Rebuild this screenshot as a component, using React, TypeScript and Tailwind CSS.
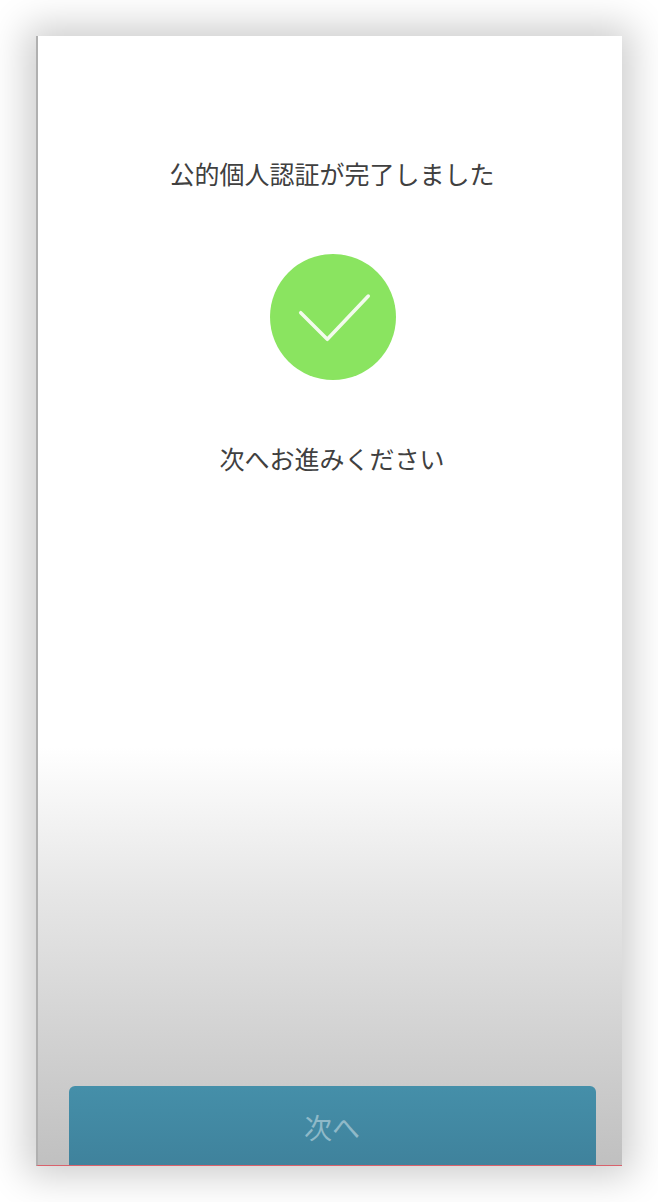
export default function App() {
  return (
    <div className="h-[1202px] w-[658px] overflow-hidden bg-white pt-[36px] pl-[36px]" style={{ fontFamily: '"Noto Sans CJK JP", "Noto Sans", sans-serif' }}>
      <div className="flex h-[1130px] w-[586px] flex-col items-center border-l-2 border-b border-l-[#b0b0b0] border-b-[#d9626c] bg-[linear-gradient(to_bottom,#ffffff_0%,#ffffff_63%,#e6e6e6_76%,#cbcbcb_93%,#c0c0c0_100%)] pl-[4px] shadow-[0_0_36px_10px_rgba(0,0,0,0.2)]">
        <h1 className="mt-[119px] text-[25px] leading-[36px] font-normal text-[#404040]">公的個人認証が完了しました</h1>
        <div className="mt-[63px] ml-[2px] flex h-[126px] w-[126px] items-center justify-center rounded-full bg-[#8ae460]">
          <svg width="126" height="126" viewBox="0 0 126 126" fill="none">
            <path d="M30.7 58.7 L57.3 85.3 L98.3 42" stroke="#f2fbec" strokeWidth="3.5" strokeLinecap="round" strokeLinejoin="round" />
          </svg>
        </div>
        <p className="mt-[60px] text-[25px] leading-[36px] text-[#404040]">次へお進みください</p>
        <button className="mt-auto flex h-[79px] w-[527px] items-center justify-center rounded-t-[6px] bg-[linear-gradient(to_bottom,#458fa9,#3f829c)] pt-[3px] text-[28px] text-[#8fb9c8]">次へ</button>
      </div>
    </div>
  );
}
